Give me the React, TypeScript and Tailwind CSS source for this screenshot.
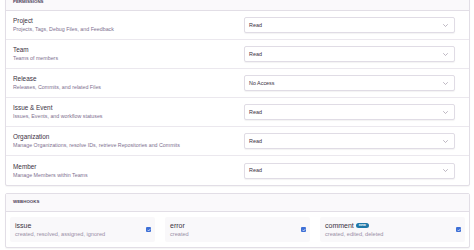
import React from "react";

const permissions = [
  { title: "Project", desc: "Projects, Tags, Debug Files, and Feedback", value: "Read" },
  { title: "Team", desc: "Teams of members", value: "Read" },
  { title: "Release", desc: "Releases, Commits, and related Files", value: "No Access" },
  { title: "Issue & Event", desc: "Issues, Events, and workflow statuses", value: "Read" },
  { title: "Organization", desc: "Manage Organizations, resolve IDs, retrieve Repositories and Commits", value: "Read" },
  { title: "Member", desc: "Manage Members within Teams", value: "Read" },
];

const webhooks = [
  { title: "issue", desc: "created, resolved, assigned, ignored", isNew: false },
  { title: "error", desc: "created", isNew: false },
  { title: "comment", desc: "created, edited, deleted", isNew: true },
];

function Chevron() {
  return (
    <svg width="5" height="3" viewBox="0 0 10 6" fill="none" className="text-[#9a91a3]">
      <path d="M1 1l4 4 4-4" stroke="currentColor" strokeWidth="1.3" strokeLinecap="round" strokeLinejoin="round" />
    </svg>
  );
}

function Checkbox() {
  return (
    <div className="flex h-[5px] w-[5px] items-center justify-center rounded-[1px] bg-[#3d6fd6]">
      <svg width="4" height="4" viewBox="0 0 8 8" fill="none">
        <path d="M1.5 4.2l1.8 1.8 3.2-3.8" stroke="white" strokeWidth="1.3" strokeLinecap="round" strokeLinejoin="round" />
      </svg>
    </div>
  );
}

export default function App() {
  return (
    <div
      className="h-[250px] w-[474px] overflow-hidden bg-white pl-[5px] pr-[4px] text-[#2f2936]"
      style={{ fontFamily: '"Liberation Sans", Arial, sans-serif' }}
    >
      <div className="-mt-[8px] flex flex-col gap-[7px]">
        {/* Permissions */}
        <div className="rounded-[2px] border border-[#e2dee6] bg-white shadow-[0_1px_1px_rgba(0,0,0,0.04)]">
          <div className="flex h-[18px] items-center border-b border-[#e2dee6] bg-[#faf9fb] px-[7px] pt-[1px] text-[4.4px] font-bold uppercase text-[#4d4158]">
            Permissions
          </div>
          {permissions.map((p, i) => (
            <div
              key={p.title}
              className={`flex h-[29px] items-center pl-[7px] pr-[14px] ${i < permissions.length - 1 ? "border-b border-[#ebe8ee]" : ""}`}
            >
              <div className="flex flex-1 flex-col">
                <span className="text-[6.4px] leading-[8px] text-[#3a3142]">{p.title}</span>
                <span className="text-[5.3px] leading-[8px] text-[#80708f]">{p.desc}</span>
              </div>
              <div className="flex h-[16px] w-[211px] items-center justify-between rounded-[2px] border border-[#e0dce5] bg-white pl-[4px] pr-[6px] shadow-[0_1px_1px_rgba(0,0,0,0.05)]">
                <span className="text-[5.4px] text-[#3a3142]">{p.value}</span>
                <Chevron />
              </div>
            </div>
          ))}
        </div>

        {/* Webhooks */}
        <div className="rounded-[2px] border border-[#e2dee6] bg-white shadow-[0_1px_1px_rgba(0,0,0,0.04)]">
          <div className="flex h-[18px] items-center border-b border-[#e2dee6] bg-[#faf9fb] px-[7px] text-[4.4px] font-bold uppercase text-[#4d4158]">
            Webhooks
          </div>
          <div className="grid grid-cols-3 gap-[10px] px-[4px] py-[5px]">
            {webhooks.map((w) => (
              <div key={w.title} className="flex items-center rounded-[2px] bg-[#f9f8fa] py-[4px] pl-[5px] pr-[4px]">
                <div className="flex flex-1 flex-col">
                  <div className="flex h-[9px] items-center gap-[2px]">
                    <span className="text-[7px] leading-[9px] text-[#3a3142]">{w.title}</span>
                    {w.isNew && (
                      <span className="rounded-full bg-[#1f78a8] px-[3px] text-[3.6px] font-bold leading-[5px] text-white">
                        new
                      </span>
                    )}
                  </div>
                  <span className="text-[5.6px] leading-[8px] text-[#9a8fa6]">{w.desc}</span>
                </div>
                <Checkbox />
              </div>
            ))}
          </div>
        </div>
      </div>
    </div>
  );
}
